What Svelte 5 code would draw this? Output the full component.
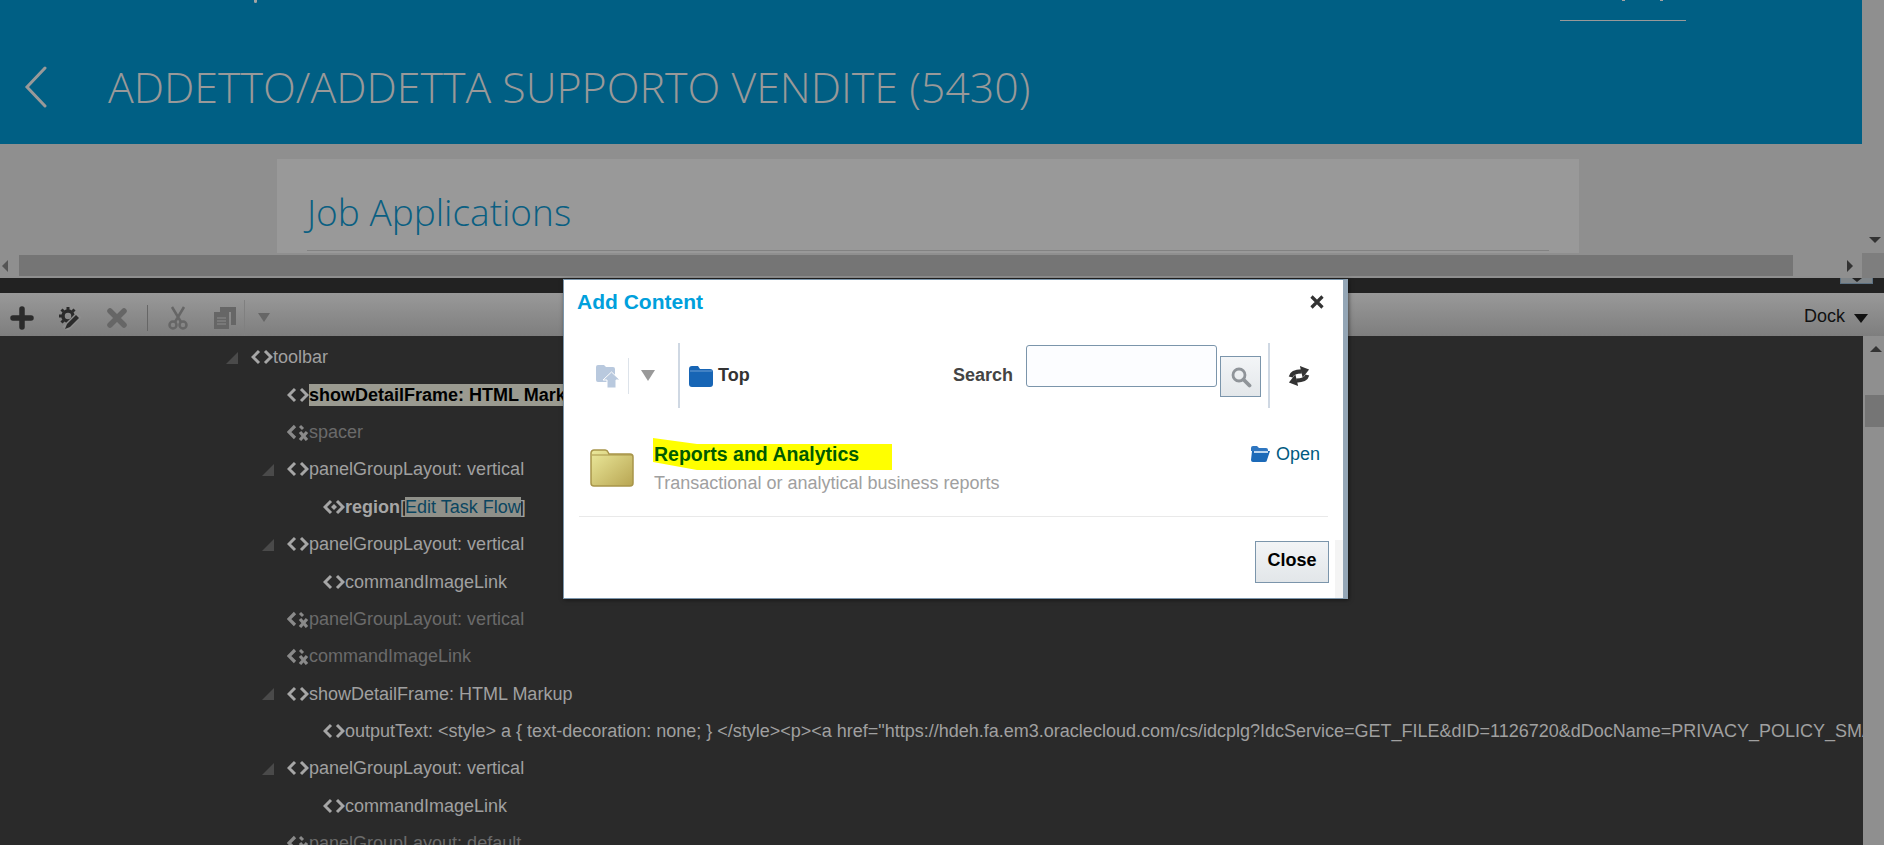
<script>
  const rows = [
    { indent: 0, arrow: true, label: 'toolbar' },
    { indent: 1, kind: 'selected', label: 'showDetailFrame: HTML Markup' },
    { indent: 1, off: true, label: 'spacer' },
    { indent: 1, arrow: true, label: 'panelGroupLayout: vertical' },
    { indent: 2, kind: 'region' },
    { indent: 1, arrow: true, label: 'panelGroupLayout: vertical' },
    { indent: 2, label: 'commandImageLink' },
    { indent: 1, off: true, label: 'panelGroupLayout: vertical' },
    { indent: 1, off: true, label: 'commandImageLink' },
    { indent: 1, arrow: true, label: 'showDetailFrame: HTML Markup' },
    {
      indent: 2,
      label:
        'outputText: <style> a { text-decoration: none; } </style><p><a href="https://hdeh.fa.em3.oraclecloud.com/cs/idcplg?IdcService=GET_FILE&dID=1126720&dDocName=PRIVACY_POLICY_SMALL&allowInterrupt=1">'
    },
    { indent: 1, arrow: true, label: 'panelGroupLayout: vertical' },
    { indent: 2, label: 'commandImageLink' },
    { indent: 1, off: true, label: 'panelGroupLayout: default' }
  ];
</script>

<div class="page">
  <header class="banner">
    <span class="mark logo-mark"></span>
    <div class="user-menu">
      <span class="mark m1"></span>
      <span class="mark m2"></span>
    </div>
    <div class="title-row">
      <svg class="back" width="24" height="44" viewBox="0 0 24 44">
        <path d="M21 2 3 21l18 19" fill="none" stroke="#999" stroke-width="3" stroke-linecap="round" />
      </svg>
      <h1>ADDETTO/ADDETTA SUPPORTO VENDITE (5430)</h1>
    </div>
  </header>

  <span class="side-down"></span>

  <section class="content">
    <div class="card">
      <h2>Job Applications</h2>
    </div>
  </section>

  <div class="hscroll">
    <span class="tri left"></span>
    <div class="thumb"></div>
    <span class="tri right"></span>
    <div class="corner"></div>
  </div>

  <div class="band">
    <span class="peek"></span>
  </div>

  <div class="toolbar">
    <div class="tools">
      <svg class="t-plus" width="24" height="24" viewBox="0 0 24 24"><path d="M12 3v18M3 12h18" stroke="#2b2b2b" stroke-width="5.500" stroke-linecap="round" /></svg>
      <svg class="t-gear" width="24" height="24" viewBox="0 0 24 24">
        <circle cx="10" cy="10" r="5" fill="none" stroke="#2b2b2b" stroke-width="3.500" />
        <path d="M10 1v3M10 16v3M1 10h3M16 10h3M3.500 3.500l2 2M14.500 14.500l2 2M3.500 16.500l2-2M14.500 5.500l2-2" stroke="#2b2b2b" stroke-width="3" />
        <path d="M7 23l14-14" stroke="#8e8e8e" stroke-width="7" />
        <path d="M7 23l2-5 9-9 3 3-9 9z" fill="#2b2b2b" />
      </svg>
      <svg class="t-x" width="22" height="22" viewBox="0 0 22 22"><path d="M4 4l14 14M18 4 4 18" stroke="#666" stroke-width="5.500" stroke-linecap="round" /></svg>
      <span class="rule"></span>
      <svg class="t-cut" width="22" height="24" viewBox="0 0 22 24">
        <path d="M5 1l9 15M17 1 8 16" stroke="#666" stroke-width="2.500" />
        <circle cx="6" cy="19" r="3.500" fill="none" stroke="#666" stroke-width="2.500" />
        <circle cx="16" cy="19" r="3.500" fill="none" stroke="#666" stroke-width="2.500" />
      </svg>
      <svg class="t-copy" width="23" height="24" viewBox="0 0 23 24">
        <path d="M7 1h16v18h-5V6H7z" fill="#666" />
        <path d="M1 6h6V5h9v18H1z" fill="#666" />
        <path d="M4 12h9M4 15h9M4 18h9" stroke="#8c8c8c" />
      </svg>
      <span class="rule faint"></span>
      <span class="tb-arrow"></span>
    </div>
    <div class="dock">Dock <span class="dock-arrow"></span></div>
  </div>

  <div class="lower">
    <div class="tree">
      {#each rows as row}
        <div class="row" class:off={row.off} class:lvl0={row.indent === 0} class:lvl1={row.indent === 1} class:lvl2={row.indent === 2}>
          <span class="twist" class:on={row.arrow}></span>
          <svg class="tag" width="22" height="17" viewBox="0 0 22 17">
            {#if row.off}
              <path d="M8 2 2 8l6 6" fill="none" stroke="#8a8a8a" stroke-width="3.200" />
              <path d="M13 2l3 3" stroke="#8a8a8a" stroke-width="3" />
              <path d="M13 8l7 8M20 8l-7 8" stroke="#8a8a8a" stroke-width="3.200" />
            {:else}
              <path d="M8 2 2 8l6 6M14 2l6 6-6 6" fill="none" stroke="#a6a6a6" stroke-width="3" />
              {#if row.kind === 'region'}
                <path d="M11 5l3 3-3 3-3-3z" fill="#a6a6a6" />
              {/if}
            {/if}
          </svg>
          {#if row.kind === 'selected'}
            <span class="selected">{row.label}</span>
          {:else if row.kind === 'region'}
            <span class="text"><b>region</b>[<span class="flow">Edit Task Flow</span>]</span>
          {:else}
            <span class="text">{row.label}</span>
          {/if}
        </div>
      {/each}
    </div>
    <div class="vscroll">
      <span class="up"></span>
      <div class="vthumb"></div>
    </div>
  </div>

  <div class="dialog">
    <div class="dialog-head">
      <span class="dialog-title">Add Content</span>
      <svg width="16" height="16" viewBox="0 0 16 16"><path d="M2.500 2.500l11 11M13.500 2.500l-11 11" stroke="#333" stroke-width="3.200" /></svg>
    </div>

    <div class="dialog-tools">
      <svg class="up-folder" width="24" height="24" viewBox="0 0 24 24">
        <path d="M0 3a2 2 0 0 1 2-2h6l2 2h7a2 2 0 0 1 2 2v13H2a2 2 0 0 1-2-2z" fill="#b9c9de" />
        <path d="M11 24v-8H7l8.500-8 8.500 8h-4v8z" fill="#b9c9de" stroke="#fff" />
      </svg>
      <span class="thin"></span>
      <span class="gray-arrow"></span>
      <span class="sep"></span>
      <svg class="top-folder" width="24" height="22" viewBox="0 0 24 22">
        <path d="M0 4a3 3 0 0 1 3-3h6l2 3h10a3 3 0 0 1 3 3v12a3 3 0 0 1-3 3H3a3 3 0 0 1-3-3z" fill="#1765b5" />
        <path d="M1 6h22" stroke="#6d9fd4" />
      </svg>
      <span class="top">Top</span>
      <span class="search-label">Search</span>
      <input class="search" type="text" aria-label="Search" />
      <span class="search-btn">
        <svg width="22" height="22" viewBox="0 0 22 22">
          <circle cx="9" cy="9" r="6" fill="none" stroke="#8f9499" stroke-width="2.800" />
          <path d="M13.500 13.500l6 6" stroke="#8f9499" stroke-width="3.800" stroke-linecap="round" />
        </svg>
      </span>
      <span class="sep right"></span>
      <svg class="refresh" width="22" height="24" viewBox="0 0 24 24">
        <path d="M3 13C4 9 8 7 15 7" fill="none" stroke="#333" stroke-width="4.500" />
        <path d="M13 1l10 4-7 9z" fill="#333" />
        <path d="M21 11c-1 4-5 6-12 6" fill="none" stroke="#333" stroke-width="4.500" />
        <path d="M11 23 1 19l7-9z" fill="#333" />
      </svg>
    </div>

    <div class="item">
      <svg class="big-folder" width="44" height="38" viewBox="0 0 44 38">
        <defs>
          <linearGradient id="fold" x1="0" y1="0" x2="1" y2="1">
            <stop offset="0" stop-color="#ecea9c" />
            <stop offset="1" stop-color="#b8a552" />
          </linearGradient>
        </defs>
        <path d="M1 4a3 3 0 0 1 3-3h11a3 3 0 0 1 3 2l1 2h21a3 3 0 0 1 3 3v26a3 3 0 0 1-3 3H4a3 3 0 0 1-3-3z" fill="url(#fold)" stroke="#a8954a" stroke-width="1.500" />
        <path d="M2 6h40" stroke="#a8954a" />
      </svg>
      <div class="item-text">
        <div class="item-name"><span>Reports and Analytics</span></div>
        <div class="item-desc">Transactional or analytical business reports</div>
      </div>
      <div class="open">
        <svg width="19" height="16" viewBox="0 0 19 16">
          <path d="M0 2a2 2 0 0 1 2-2h4l2 2h7a2 2 0 0 1 2 2v1H0z" fill="#2f76c0" />
          <path d="M1 5h18l-3 9a2 2 0 0 1-2 2H2a2 2 0 0 1-2-2z" fill="#1c6ab8" />
          <path d="M3 6h14" stroke="#bcd6ef" stroke-width="2" />
        </svg>
        <span>Open</span>
      </div>
    </div>

    <div class="dialog-foot">
      <button class="close" type="button">Close</button>
    </div>
    <div class="strip"></div>
  </div>
</div>

<style>
  :global(body) {
    margin: 0;
    background: #8f8f8f;
  }

  .page {
    position: relative;
    width: 1884px;
    height: 845px;
    overflow: hidden;
    font-family: 'Liberation Sans', Arial, sans-serif;
  }

  .banner {
    position: relative;
    width: 1862px;
    height: 144px;
    background: #005f84;
    box-sizing: border-box;
    padding: 66px 0 0 24px;
  }

  .user-menu {
    position: absolute;
    left: 1560px;
    top: 20px;
    width: 126px;
    border-top: 1px solid #999;
  }

  .mark {
    position: absolute;
    background: #a3a3a3;
  }

  .logo-mark {
    left: 254px;
    top: 0;
    width: 3px;
    height: 3px;
    border-radius: 0 0 2px 2px;
  }

  .m1 {
    left: 62px;
    top: -21px;
    width: 3px;
    height: 1px;
  }

  .m2 {
    left: 100px;
    top: -21px;
    width: 3px;
    height: 1px;
  }

  .side-down {
    position: absolute;
    left: 1869px;
    top: 237px;
    border-left: 6px solid transparent;
    border-right: 6px solid transparent;
    border-top: 6px solid #333;
  }

  .title-row {
    display: flex;
    align-items: center;
    gap: 60px;
  }

  .back {
    flex: none;
  }

  h1 {
    margin: -3px 0 0;
    font-family: 'Open Sans', sans-serif;
    font-weight: 300;
    font-size: 42.9px;
    line-height: 44px;
    color: #999;
    white-space: nowrap;
  }

  .content {
    height: 111px;
    box-sizing: border-box;
    padding: 15px 0 0 277px;
    background: #8f8f8f;
  }

  .card {
    width: 1302px;
    height: 94px;
    background: #999;
    box-sizing: border-box;
    padding: 0 30px;
  }

  h2 {
    margin: 0;
    height: 92px;
    box-sizing: border-box;
    padding-top: 30px;
    font-family: 'Open Sans', sans-serif;
    font-weight: 300;
    font-size: 37px;
    line-height: 46px;
    color: #0a5f82;
    border-bottom: 1px solid #828282;
  }

  .hscroll {
    position: relative;
    height: 23px;
    background: #8f8f8f;
  }

  .thumb {
    position: absolute;
    left: 19px;
    top: 0;
    width: 1774px;
    height: 21px;
    background: #757575;
  }

  .tri {
    position: absolute;
    top: 5px;
    width: 0;
    height: 0;
    border-top: 6px solid transparent;
    border-bottom: 6px solid transparent;
  }

  .tri.left {
    left: 2px;
    border-right: 6px solid #555;
  }

  .tri.right {
    left: 1847px;
    border-left: 6px solid #333;
  }

  .corner {
    position: absolute;
    right: 0;
    top: -2px;
    width: 22px;
    height: 25px;
    background: #7e7e7e;
  }

  .band {
    position: relative;
    height: 15px;
    background: #222;
  }

  .peek {
    position: absolute;
    left: 1840px;
    top: 0;
    width: 33px;
    height: 6px;
    box-sizing: border-box;
    background: #7e8488;
    border: 1px solid #5d7182;
    border-top: 0;
  }

  .peek::after {
    content: '';
    position: absolute;
    left: 11px;
    top: 0;
    border-left: 5px solid transparent;
    border-right: 5px solid transparent;
    border-top: 4px solid #222;
  }

  .toolbar {
    display: flex;
    align-items: center;
    justify-content: space-between;
    height: 43px;
    background: linear-gradient(#999, #7e7e7e);
    padding: 0 16px 0 10px;
    box-sizing: border-box;
  }

  .tools {
    display: flex;
    align-items: center;
    padding-top: 6px;
  }

  .tools svg {
    flex: none;
  }

  .t-plus {
    margin-right: 24px;
  }

  .t-gear {
    margin-right: 24px;
  }

  .t-x {
    margin-right: 19px;
  }

  .t-cut {
    margin-right: 24px;
  }

  .t-copy {
    margin-right: 8px;
  }

  .rule {
    width: 1px;
    height: 26px;
    background: #666;
    margin-right: 19px;
  }

  .rule.faint {
    height: 36px;
    background: #808080;
    margin-right: 13px;
  }

  .tb-arrow {
    border-left: 6.500px solid transparent;
    border-right: 6.500px solid transparent;
    border-top: 9px solid #666;
  }

  .dock {
    display: flex;
    align-items: center;
    gap: 9px;
    padding-top: 4px;
    font-size: 18px;
    color: #111;
  }

  .dock-arrow {
    margin-top: 3px;
    border-left: 7px solid transparent;
    border-right: 7px solid transparent;
    border-top: 9px solid #111;
  }

  .lower {
    display: flex;
    height: 509px;
  }

  .tree {
    flex: none;
    width: 1863px;
    background: #2a2a2a;
    overflow: hidden;
    padding-top: 3px;
    box-sizing: border-box;
  }

  .row {
    display: flex;
    align-items: center;
    height: 37.4px;
    font-size: 18px;
    color: #a0a0a0;
    white-space: nowrap;
  }

  .row.lvl0 {
    padding-left: 226px;
  }

  .row.lvl1 {
    padding-left: 262px;
  }

  .row.lvl2 {
    padding-left: 298px;
  }

  .row.off {
    color: #6a6a6a;
  }

  .twist {
    flex: none;
    width: 0;
    height: 0;
    margin-right: 13px;
    border-left: 12px solid transparent;
    border-bottom: 12px solid transparent;
  }

  .twist.on {
    border-bottom-color: #4a4a4a;
  }

  .tag {
    flex: none;
    margin-right: 0;
  }

  .selected {
    background: #9a9a90;
    color: #000;
    font-weight: 700;
    line-height: 22px;
  }

  .flow {
    background: #8f9089;
    color: #0a4560;
    line-height: 20px;
    display: inline-block;
  }

  b {
    color: #a6a6a6;
  }

  .vscroll {
    position: relative;
    flex: 1;
    background: #8f8f8f;
  }

  .up {
    position: absolute;
    left: 7px;
    top: 10px;
    border-left: 6px solid transparent;
    border-right: 6px solid transparent;
    border-bottom: 6px solid #333;
  }

  .vthumb {
    position: absolute;
    left: 2px;
    right: 0;
    top: 59px;
    height: 32px;
    background: #757575;
  }

  .dialog {
    position: absolute;
    left: 563px;
    top: 279px;
    width: 785px;
    height: 320px;
    box-sizing: border-box;
    background: #fff;
    border: 1px solid #7b95ab;
    border-right: 5px solid #94a6b6;
    box-shadow: 1px 1px 4px rgba(0, 0, 0, 0.5);
    color: #333;
  }

  .dialog-head {
    display: flex;
    align-items: center;
    justify-content: space-between;
    height: 44px;
    padding: 0 18px 0 13px;
  }

  .dialog-title {
    font-size: 21px;
    font-weight: 700;
    color: #00a0dc;
  }

  .dialog-tools {
    display: flex;
    align-items: center;
    height: 65px;
    margin-top: 19px;
    padding: 0 33px 0 32px;
  }

  .dialog-tools svg {
    flex: none;
  }

  .thin {
    width: 1px;
    height: 36px;
    background: #dde3ea;
    margin: 0 12px 0 8px;
  }

  .gray-arrow {
    border-left: 7px solid transparent;
    border-right: 7px solid transparent;
    border-top: 11px solid #999;
  }

  .sep {
    width: 2px;
    height: 65px;
    background: #cfd8e3;
    margin: 0 9px 0 23px;
  }

  .sep.right {
    margin: 0 18px 0 7px;
  }

  .top {
    margin-left: 5px;
    font-size: 18px;
    font-weight: 700;
  }

  .search-label {
    margin-left: auto;
    margin-right: 13px;
    font-size: 18px;
    font-weight: 700;
    color: #444;
  }

  .search {
    width: 191px;
    height: 42px;
    box-sizing: border-box;
    border: 1px solid #7b95ab;
    border-radius: 3px;
    background: #fcfdff;
    margin: 0 3px 19px 0;
    padding: 0;
  }

  .search-btn {
    display: flex;
    align-items: center;
    justify-content: center;
    width: 41px;
    height: 41px;
    margin-top: 2px;
    box-sizing: border-box;
    border: 1px solid #7b95ab;
    background: linear-gradient(#f3f5f7, #e3e7ea);
  }

  .item {
    display: flex;
    height: 109px;
    margin: 0 15px;
    border-bottom: 1px solid #e9e9e9;
    box-sizing: border-box;
  }

  .big-folder {
    flex: none;
    margin: 41px 20px 0 11px;
  }

  .item-text {
    flex: 1;
  }

  .item-name {
    position: relative;
    margin-top: 30px;
    height: 32px;
    font-size: 19.5px;
    line-height: 32px;
    font-weight: 700;
    color: #005a00;
  }

  /* hand-drawn marker highlight behind the name */
  .item-name::before {
    content: '';
    position: absolute;
    left: -1px;
    top: 0;
    width: 239px;
    height: 32px;
    background: #ffff00;
    clip-path: polygon(0 0, 44px 6px, 100% 6px, 100% 100%, 44px 100%, 0 24px);
  }

  .item-name span {
    position: relative;
  }

  .item-desc {
    font-size: 18px;
    line-height: 26px;
    color: #a0a0a0;
  }

  .open {
    display: flex;
    align-items: center;
    gap: 6px;
    height: 24px;
    margin: 34px 8px 0 0;
    font-size: 18px;
    color: #005a7f;
  }

  .dialog-foot {
    display: flex;
    justify-content: flex-end;
    padding: 24px 14px 0 0;
  }

  .close {
    width: 74px;
    height: 42px;
    border: 1px solid #7b95ab;
    background: linear-gradient(#f2f4f6, #e2e6e9);
    font-family: inherit;
    font-size: 18px;
    font-weight: 700;
    color: #000;
    padding: 0 0 4px;
  }

  .strip {
    position: absolute;
    right: 0;
    top: 260px;
    bottom: 0;
    width: 8px;
    background: #f4f4f4;
  }
</style>
